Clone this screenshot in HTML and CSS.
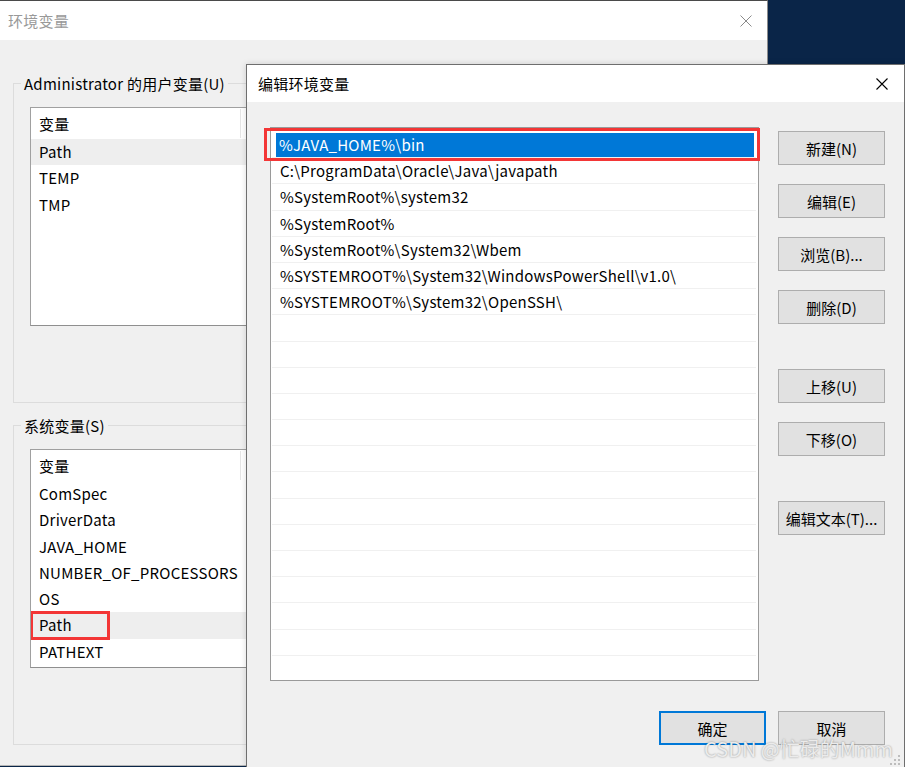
FILE: index.html
```html
<!DOCTYPE html>
<html lang="zh-CN">
<head>
    <meta charset="UTF-8">
    <meta name="viewport" content="width=device-width, initial-scale=1.0">
    <title>编辑环境变量</title>
    <link rel="stylesheet" href="styles.css">
</head>
<body>

    <!-- Background window: 环境变量 -->
    <div class="window env-window">
        <div class="titlebar inactive">
            <span class="title">环境变量</span>
            <svg class="close" width="12" height="12" viewBox="0 0 12 12">
                <path d="M0.5 0.5 L11.5 11.5 M11.5 0.5 L0.5 11.5" stroke="#8a8a8a" stroke-width="1" fill="none"/>
            </svg>
        </div>
        <div class="env-body">
            <div class="group">
                <div class="group-title">Administrator 的用户变量(U)</div>
                <div class="listview">
                    <div class="lv-header"><span class="lv-col">变量</span></div>
                    <div class="lv-row hover">Path</div>
                    <div class="lv-row">TEMP</div>
                    <div class="lv-row">TMP</div>
                </div>
            </div>
            <div class="group">
                <div class="group-title">系统变量(S)</div>
                <div class="listview">
                    <div class="lv-header"><span class="lv-col">变量</span></div>
                    <div class="lv-row">ComSpec</div>
                    <div class="lv-row">DriverData</div>
                    <div class="lv-row">JAVA_HOME</div>
                    <div class="lv-row">NUMBER_OF_PROCESSORS</div>
                    <div class="lv-row">OS</div>
                    <div class="lv-row hover">Path<span class="mark mark-path"></span></div>
                    <div class="lv-row">PATHEXT</div>
                </div>
            </div>
        </div>
    </div>

    <!-- Foreground dialog: 编辑环境变量 -->
    <div class="window edit-dialog">
        <div class="titlebar">
            <span class="title">编辑环境变量</span>
            <svg class="close" width="12" height="12" viewBox="0 0 12 12">
                <path d="M0.5 0.5 L11.5 11.5 M11.5 0.5 L0.5 11.5" stroke="#000" stroke-width="1.1" fill="none"/>
            </svg>
        </div>
        <div class="dialog-body">
            <div class="path-list-wrap">
                <div class="path-list">
                    <div class="path-row editing"><span class="sel">%JAVA_HOME%\bin</span></div>
                    <div class="path-row">C:\ProgramData\Oracle\Java\javapath</div>
                    <div class="path-row">%SystemRoot%\system32</div>
                    <div class="path-row">%SystemRoot%</div>
                    <div class="path-row">%SystemRoot%\System32\Wbem</div>
                    <div class="path-row">%SYSTEMROOT%\System32\WindowsPowerShell\v1.0\</div>
                    <div class="path-row">%SYSTEMROOT%\System32\OpenSSH\</div>
                    <div class="path-row"></div>
                    <div class="path-row"></div>
                    <div class="path-row"></div>
                    <div class="path-row"></div>
                    <div class="path-row"></div>
                    <div class="path-row"></div>
                    <div class="path-row"></div>
                    <div class="path-row"></div>
                    <div class="path-row"></div>
                    <div class="path-row"></div>
                    <div class="path-row"></div>
                    <div class="path-row"></div>
                    <div class="path-row"></div>
                    <div class="path-row"></div>
                </div>
                <div class="mark mark-edit"></div>
            </div>

            <div class="side-buttons">
                <button class="btn">新建(N)</button>
                <button class="btn">编辑(E)</button>
                <button class="btn">浏览(B)...</button>
                <button class="btn">删除(D)</button>
                <button class="btn btn-group">上移(U)</button>
                <button class="btn">下移(O)</button>
                <button class="btn btn-group">编辑文本(T)...</button>
            </div>

            <div class="footer">
                <button class="btn default">确定</button>
                <button class="btn">取消</button>
            </div>
        </div>
        <svg class="grip" width="10" height="10" viewBox="0 0 10 10">
            <rect x="8" y="0" width="2" height="2" fill="#bdbdbd"/>
            <rect x="4" y="4" width="2" height="2" fill="#bdbdbd"/>
            <rect x="8" y="4" width="2" height="2" fill="#bdbdbd"/>
            <rect x="0" y="8" width="2" height="2" fill="#bdbdbd"/>
            <rect x="4" y="8" width="2" height="2" fill="#bdbdbd"/>
            <rect x="8" y="8" width="2" height="2" fill="#bdbdbd"/>
        </svg>
    </div>

    <div class="watermark">CSDN @忙碌的Mmm</div>

</body>
</html>
```

FILE: styles.css
```css
/* Reset */
* {
    margin: 0;
    padding: 0;
    box-sizing: border-box;
}

html, body {
    width: 905px;
    height: 767px;
    overflow: hidden;
}

/* Desktop */
body {
    position: relative;
    background-color: #0a2548;
    font-family: "Noto Sans CJK SC", sans-serif;
    font-size: 15px;
    letter-spacing: 0.25px;
    color: #000;
}

/* Windows (placed on the desktop) */
.window {
    position: absolute;
    background-color: #f0f0f0;
}

.env-window {
    left: 0;
    top: 0;
    width: 768px;
    height: 766px;
    border-top: 1px solid #4a4a4a;
    border-right: 1px solid #8c8c8c;
    border-bottom: 1px solid #b5b5b5;
}

.edit-dialog {
    left: 246px;
    top: 64px;
    width: 659px;
    height: 710px;
    border: 1px solid #6e6e6e;
    box-shadow: 0 0 6px rgba(0, 0, 0, 0.15);
}

/* Title bars */
.titlebar {
    display: flex;
    align-items: center;
    justify-content: space-between;
    background-color: #fff;
}

.env-window .titlebar {
    height: 39px;
    padding: 0 15px 0 8px;
}

.edit-dialog .titlebar {
    height: 37px;
    padding: 0 16px 0 11px;
}

.titlebar.inactive .title {
    color: #999;
}

.close {
    display: block;
}

/* Group boxes */
.env-body {
    padding: 43px 0 0 13px;
}

.group {
    width: 760px;
    border: 1px solid #dcdcdc;
    border-right: none;
    padding: 0 0 76px 16px;
}

.group + .group {
    margin-top: 22px;
}

.group-title {
    width: fit-content;
    height: 20px;
    line-height: 20px;
    margin: -10px 0 0 -9px;
    padding: 0 3px;
    background-color: #f0f0f0;
}

/* List views */
.listview {
    height: 219px;
    margin-top: 13px;
    background-color: #fff;
    border: 1px solid #a0a0a0;
    border-bottom-color: #8f8f8f;
    overflow: hidden;
}

.group + .group .listview {
    margin-top: 13px;
}

.lv-header {
    height: 31px;
    display: flex;
    align-items: center;
}

.lv-col {
    width: 210px;
    height: 29px;
    line-height: 29px;
    padding-left: 8px;
    border-right: 1px solid #e5e5e5;
}

.lv-row {
    position: relative;
    height: 26.3px;
    line-height: 26px;
    padding-left: 8px;
}

.lv-row.hover {
    background-color: #eeeeee;
}

/* Red annotation boxes */
.mark {
    position: absolute;
    border: 3px solid #f33636;
}

.mark-path {
    left: -1px;
    top: -1px;
    width: 80px;
    height: 29px;
}

.mark-edit {
    left: -6px;
    top: 1px;
    width: 496px;
    height: 33px;
}

/* Dialog body */
.dialog-body {
    display: grid;
    grid-template-columns: 489px 107px;
    column-gap: 19px;
    padding: 25px 19px 0 23px;
}

.path-list-wrap {
    position: relative;
}

.path-list {
    height: 554px;
    padding: 4px 2px 0 1px;
    background-color: #fff;
    border: 1px solid #9a9a9a;
    overflow: hidden;
}

.path-row {
    height: 26.2px;
    line-height: 25px;
    padding-left: 8px;
    border-bottom: 1px solid #f0f0f0;
    white-space: nowrap;
}

.path-row.editing {
    padding: 1px 2px 1px 4px;
    line-height: 23px;
}

.path-row .sel {
    display: block;
    height: 24px;
    padding-left: 3px;
    background-color: #0078d7;
    color: #fff;
}

/* Buttons */
.side-buttons {
    display: flex;
    flex-direction: column;
    gap: 19px;
    padding-top: 4px;
}

.btn {
    height: 34px;
    width: 107px;
    font-family: inherit;
    font-size: 15px;
    letter-spacing: 0;
    color: #000;
    background-color: #e1e1e1;
    border: 1px solid #adadad;
}

.btn-group {
    margin-top: 26px;
}

.btn.default {
    border: 2px solid #0078d7;
}

.footer {
    grid-column: 1 / span 2;
    display: flex;
    justify-content: flex-end;
    gap: 12px;
    margin-top: 30px;
}

.grip {
    position: absolute;
    right: 4px;
    top: 690px;
}

/* Watermark */
.watermark {
    position: absolute;
    left: 704px;
    top: 739px;
    font-size: 20px;
    line-height: 20px;
    letter-spacing: 0;
    color: #ebebeb;
    text-shadow: 0 0 2px rgba(0, 0, 0, 0.4);
    white-space: nowrap;
}
```
